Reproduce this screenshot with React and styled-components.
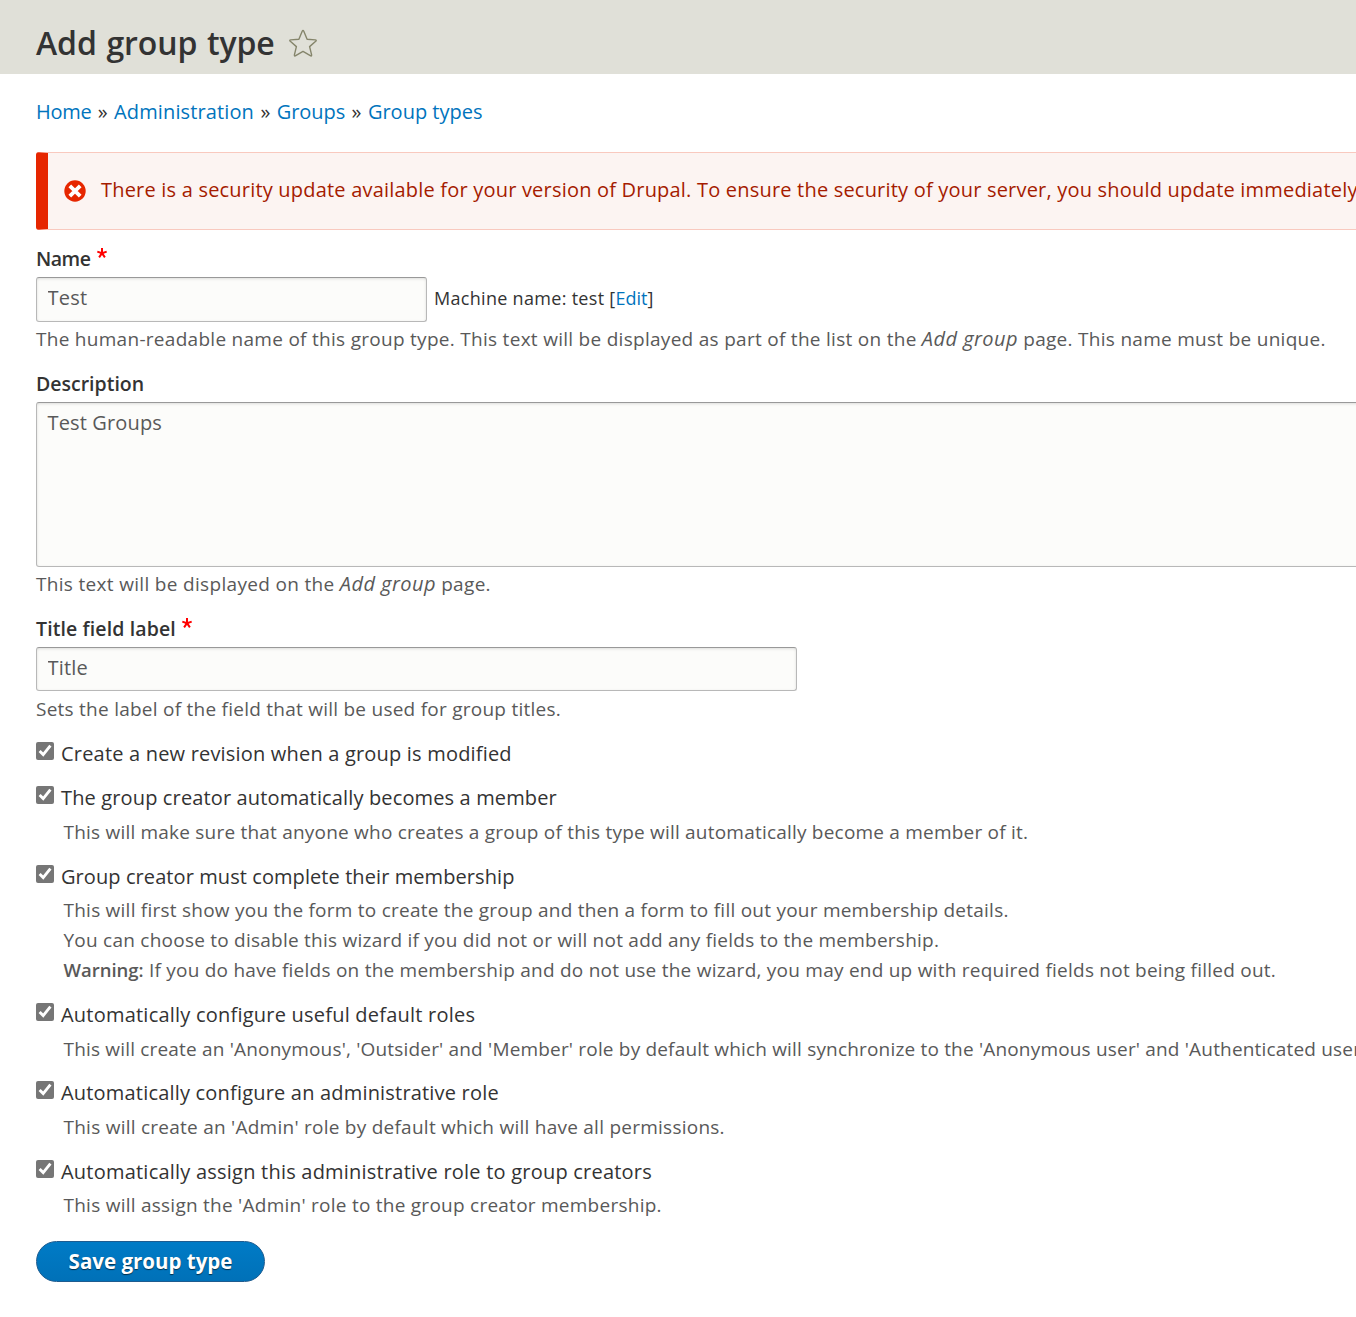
import React from 'react';
import styled, { createGlobalStyle } from 'styled-components'

const GlobalStyle = createGlobalStyle`
  body {
    margin: 0;
    background-color: #fff;
    color: #333;
    font-family: "Open Sans", "Noto Sans", sans-serif;
    font-size: 20px;
    line-height: 30px;
    overflow: hidden;
  }
`

const Page = styled.div`
  width: 100%;
  overflow: hidden;
`

const Header = styled.header`
  display: flex;
  align-items: center;
  height: 74px;
  padding: 12px 36px 0;
  box-sizing: border-box;
  background-color: #e0e0d8;
`

const PageTitle = styled.h1`
  margin: 0 14px 0 0;
  font-size: 32px;
  font-weight: 600;
  line-height: 40px;
  letter-spacing: -0.1px;
  word-spacing: 1.5px;
`

const StarIcon = styled.svg`
  width: 28px;
  height: 28px;
`

const Breadcrumb = styled.nav`
  display: flex;
  margin: 23px 36px 25px;
  white-space: pre;
`

const Link = styled.a`
  color: #0074bd;
  text-decoration: none;
  letter-spacing: ${props => props.track || 0}px;
`

const Separator = styled.span`
  width: 22.7px;
  text-align: center;
`

const ErrorMessage = styled.div`
  display: flex;
  align-items: center;
  width: 1400px;
  height: 78px;
  margin-left: 36px;
  padding: 0 16px 2px;
  box-sizing: border-box;
  border: 1px solid #f9c9bf;
  border-left: 12px solid #e62600;
  border-radius: 3px 0 0 3px;
  background-color: #fcf4f2;
  color: #a51b00;
  white-space: nowrap;
  letter-spacing: 0.2px;
`

const ErrorIcon = styled.svg`
  flex: none;
  width: 22px;
  height: 22px;
  margin: 2px 15px 0 0;
`

const Form = styled.form`
  padding: 14px 0 0 36px;
  white-space: nowrap;
`

const Item = styled.div`
  margin-bottom: 15.2px;
`

const Option = styled.div`
  margin-bottom: 14.65px;
`

const Label = styled.label`
  display: block;
  height: 33px;
  font-size: 19.5px;
  font-weight: 600;
  letter-spacing: ${props => props.track || 0}px;
`

const Required = styled.svg`
  width: 10px;
  height: 10px;
  margin-left: 6.5px;
  vertical-align: 8px;
`

const FieldRow = styled.div`
  display: flex;
  align-items: center;
`

const TextField = styled.input`
  width: ${props => props.w}px;
  height: ${props => props.h}px;
  padding: 0 10px ${props => props.h - 41}px 10.5px;
  box-sizing: border-box;
  border: 1px solid #b8b8b8;
  border-top-color: #999;
  border-radius: 3px;
  background-color: #fcfcfa;
  box-shadow: inset 0 1px 3px rgba(0, 0, 0, 0.12);
  color: #595959;
  font-family: inherit;
  font-size: 20px;
  letter-spacing: 0.2px;
`

const TextBox = styled.textarea`
  display: block;
  width: 1400px;
  height: 165px;
  padding: 5px 10.5px;
  box-sizing: border-box;
  border: 1px solid #b8b8b8;
  border-top-color: #999;
  border-radius: 3px;
  background-color: #fcfcfa;
  box-shadow: inset 0 1px 3px rgba(0, 0, 0, 0.12);
  color: #595959;
  font-family: inherit;
  font-size: 20px;
  line-height: 30px;
  letter-spacing: 0.15px;
  resize: none;
`

const MachineName = styled.span`
  margin: 0 0 4px 7px;
  font-size: 18px;
  letter-spacing: 0.3px;
`

const Help = styled.div`
  margin-top: ${props => props.gap}px;
  color: #595959;
  font-size: 19px;
  letter-spacing: ${props => props.track || 0.25}px;
`

const OptionHelp = styled(Help)`
  margin-top: 3.7px;
  margin-left: 27.5px;

  strong {
    font-size: 18.5px;
    font-weight: 600;
    letter-spacing: 0;
  }
`

const AddGroup = styled.em`
  font-size: 20px;
  letter-spacing: 0.45px;
`

const CheckLabel = styled.label`
  display: flex;
  letter-spacing: ${props => props.track}px;
`

const CheckBox = styled.input`
  width: 18px;
  height: 18px;
  margin: 3px 7px 0 0;
  accent-color: #767676;
`

const SaveButton = styled.button`
  display: block;
  width: 229px;
  height: 41px;
  margin-top: 21px;
  padding: 0 0 2px;
  border: 1px solid #1e5c90;
  border-radius: 21px;
  background-image: linear-gradient(to bottom, #007bc6, #0071b8);
  color: #fff;
  font-family: inherit;
  font-size: 20.5px;
  font-weight: 700;
  letter-spacing: 0;
  text-shadow: 0 1px 1px rgba(0, 0, 0, 0.6);
`

const options = [
  { label: 'Create a new revision when a group is modified', track: 0.19 },
  {
    label: 'The group creator automatically becomes a member',
    track: 0.14,
    help: 'This will make sure that anyone who creates a group of this type will automatically become a member of it.',
    helpTrack: 0.21
  },
  {
    label: 'Group creator must complete their membership',
    track: 0.08,
    help: <>
      This will first show you the form to create the group and then a form to fill out your membership details.<br />
      You can choose to disable this wizard if you did not or will not add any fields to the membership.<br />
      <strong>Warning:</strong> If you do have fields on the membership and do not use the wizard, you may end up with required fields not being filled out.
    </>,
    helpTrack: 0.24
  },
  {
    label: 'Automatically configure useful default roles',
    track: 0.22,
    help: "This will create an 'Anonymous', 'Outsider' and 'Member' role by default which will synchronize to the 'Anonymous user' and 'Authenticated user'",
    helpTrack: 0.18
  },
  {
    label: 'Automatically configure an administrative role',
    track: 0.19,
    help: "This will create an 'Admin' role by default which will have all permissions."
  },
  {
    label: 'Automatically assign this administrative role to group creators',
    track: 0.22,
    help: "This will assign the 'Admin' role to the group creator membership."
  }
]

const RequiredMark = () => (
  <Required viewBox="0 0 10 10" fill="none" stroke="#f00" strokeWidth="2">
    <path d="M5 5.2V0M5 5.2L.3 3.6M5 5.2l4.7-1.6M5 5.2L2.1 9.3M5 5.2l2.9 4.1" />
  </Required>
)

class App extends React.Component {

  listaOptions = () => {
    return options.map((option) => {
      return (
        <Option key={option.label}>
          <CheckLabel track={option.track}>
            <CheckBox type="checkbox" defaultChecked />
            {option.label}
          </CheckLabel>
          {option.help && <OptionHelp track={option.helpTrack}>{option.help}</OptionHelp>}
        </Option>
      )
    })
  }

  render() {
    return (
      <Page>
        <GlobalStyle />
        <Header>
          <PageTitle>Add group type</PageTitle>
          <StarIcon viewBox="0 0 28 28" fill="none" stroke="#85856b" strokeWidth="1.4" strokeLinejoin="round">
            <path d="M13.2 2.2q.8-1.6 1.6 0l3.3 8.1 8.2.6q1.6.3.4 1.4l-6.1 5.3 2 8.2q.1 1.7-1.3.9L14 22.400l-7.300 4.300q-1.400.8-1.300-.9l2-8.200-6.100-5.300q-1.200-1.100.4-1.400l8.200-.6z" />
          </StarIcon>
        </Header>

        <Breadcrumb>
          <Link track={-0.3}>Home</Link><Separator>»</Separator>
          <Link track={0.13}>Administration</Link><Separator>»</Separator>
          <Link track={-0.05}>Groups</Link><Separator>»</Separator>
          <Link>Group types</Link>
        </Breadcrumb>

        <ErrorMessage>
          <ErrorIcon viewBox="0 0 22 22">
            <circle cx="11" cy="11" r="10.7" fill="#e62600" />
            <path d="M5.8 5.8l10.400 10.400M16.200 5.800l-10.400 10.400" stroke="#fff" strokeWidth="3.8" />
          </ErrorIcon>
          There is a security update available for your version of Drupal. To ensure the security of your server, you should update immediately
        </ErrorMessage>

        <Form>
          <Item>
            <Label track={-0.5}>Name<RequiredMark /></Label>
            <FieldRow>
              <TextField w={391} h={45} defaultValue="Test" />
              <MachineName>Machine name: test [<Link>Edit</Link>]</MachineName>
            </FieldRow>
            <Help gap={1.9} track={0.285}>
              The human-readable name of this group type. This text will be displayed as part of the list on the <AddGroup>Add group</AddGroup> page. This name must be unique.
            </Help>
          </Item>

          <Item>
            <Label>Description</Label>
            <TextBox defaultValue="Test Groups" />
            <Help gap={2} track={0.32}>This text will be displayed on the <AddGroup>Add group</AddGroup> page.</Help>
          </Item>

          <Item>
            <Label track={0.12}>Title field label<RequiredMark /></Label>
            <FieldRow>
              <TextField w={761} h={44} defaultValue="Title" />
            </FieldRow>
            <Help gap={2.3}>Sets the label of the field that will be used for group titles.</Help>
          </Item>

          {this.listaOptions()}

          <SaveButton type="button">Save group type</SaveButton>
        </Form>
      </Page>
    )
  }
}

export default App;
